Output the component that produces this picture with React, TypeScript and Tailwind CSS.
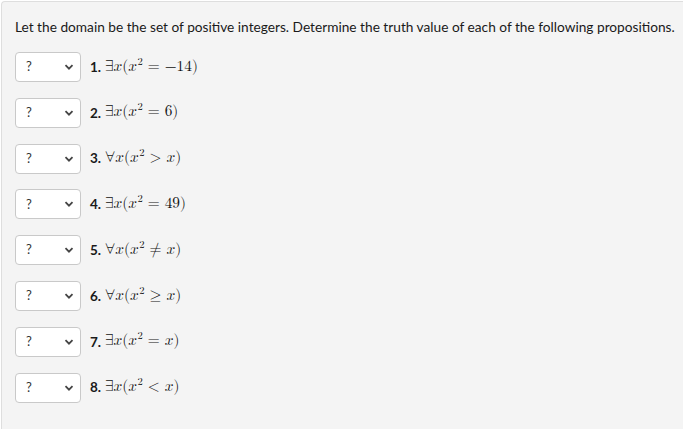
import React from "react";

const MATH = '"Latin Modern Math", "STIX Two Math", "DejaVu Serif", serif';

const X = () => <span>𝑥</span>;

const Sq = () => (
  <span className="text-[10.5px] relative top-[-6px] ml-[0.5px]">2</span>
);

const Op = ({ children }: { children: React.ReactNode }) => (
  <span className="mx-[5px]">{children}</span>
);

const quants = ["∃", "∃", "∀", "∃", "∀", "∀", "∃", "∃"];
const ops = ["=", "=", ">", "=", "≠", "≥", "=", "<"];
const rhs: React.ReactNode[] = [
  <>−14</>,
  <>6</>,
  <X />,
  <>49</>,
  <X />,
  <X />,
  <X />,
  <X />,
];

export default function App() {
  return (
    <div className="w-[683px] h-[429px] bg-white overflow-hidden">
      <div
        className="ml-[1px] mt-[1px] w-[700px] h-[440px] bg-[#f4f4f4] border-l border-t border-[#dedede] rounded-tl-[4px] pl-[13px] pt-[16px]"
        style={{ fontFamily: 'Lato, "Noto Sans", sans-serif' }}
      >
        <p className="text-[13.7px] text-[#1a1a1a] leading-[18px] whitespace-nowrap">
          Let the domain be the set of positive integers. Determine the truth value of each of the following propositions.
        </p>
        <div className="mt-[16px] flex flex-col gap-[15.8px]">
          {quants.map((q, i) => (
            <div key={i} className="flex items-center h-[30px]">
              <div className="w-[66px] h-[30px] bg-white border border-[#c9c9c9] rounded-[4px] flex items-center justify-between pl-[10px] pr-[6px]">
                <span className="text-[13px] text-[#333]">?</span>
                <svg width="10" height="10" viewBox="0 0 10 10">
                  <path d="M1.5 3.2 L5 6.7 L8.5 3.2" stroke="#444" strokeWidth="1.8" fill="none" />
                </svg>
              </div>
              <span className="ml-[9px] text-[13.5px] font-bold text-[#1a1a1a]">{i + 1}.</span>
              <span
                className="ml-[4px] text-[15.3px] text-[#111] whitespace-nowrap"
                style={{ fontFamily: MATH }}
              >
                {q}
                <X />(<X />
                <Sq />
                <Op>{ops[i]}</Op>
                {rhs[i]})
              </span>
            </div>
          ))}
        </div>
      </div>
    </div>
  );
}
